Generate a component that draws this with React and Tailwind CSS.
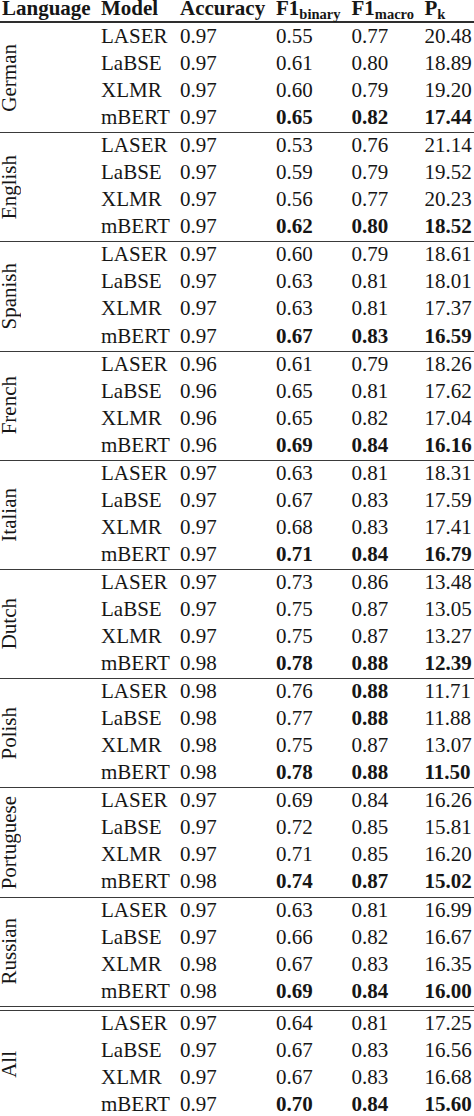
import React from "react";

// resultados por idioma; "*" marca el mejor valor (en negrita)
const groups = [
  {
    lang: "German",
    rows: [
      ["LASER", "0.97", "0.55", "0.77", "20.48"],
      ["LaBSE", "0.97", "0.61", "0.80", "18.89"],
      ["XLMR", "0.97", "0.60", "0.79", "19.20"],
      ["mBERT", "0.97", "*0.65", "*0.82", "*17.44"],
    ],
  },
  {
    lang: "English",
    rows: [
      ["LASER", "0.97", "0.53", "0.76", "21.14"],
      ["LaBSE", "0.97", "0.59", "0.79", "19.52"],
      ["XLMR", "0.97", "0.56", "0.77", "20.23"],
      ["mBERT", "0.97", "*0.62", "*0.80", "*18.52"],
    ],
  },
  {
    lang: "Spanish",
    rows: [
      ["LASER", "0.97", "0.60", "0.79", "18.61"],
      ["LaBSE", "0.97", "0.63", "0.81", "18.01"],
      ["XLMR", "0.97", "0.63", "0.81", "17.37"],
      ["mBERT", "0.97", "*0.67", "*0.83", "*16.59"],
    ],
  },
  {
    lang: "French",
    rows: [
      ["LASER", "0.96", "0.61", "0.79", "18.26"],
      ["LaBSE", "0.96", "0.65", "0.81", "17.62"],
      ["XLMR", "0.96", "0.65", "0.82", "17.04"],
      ["mBERT", "0.96", "*0.69", "*0.84", "*16.16"],
    ],
  },
  {
    lang: "Italian",
    rows: [
      ["LASER", "0.97", "0.63", "0.81", "18.31"],
      ["LaBSE", "0.97", "0.67", "0.83", "17.59"],
      ["XLMR", "0.97", "0.68", "0.83", "17.41"],
      ["mBERT", "0.97", "*0.71", "*0.84", "*16.79"],
    ],
  },
  {
    lang: "Dutch",
    rows: [
      ["LASER", "0.97", "0.73", "0.86", "13.48"],
      ["LaBSE", "0.97", "0.75", "0.87", "13.05"],
      ["XLMR", "0.97", "0.75", "0.87", "13.27"],
      ["mBERT", "0.98", "*0.78", "*0.88", "*12.39"],
    ],
  },
  {
    lang: "Polish",
    rows: [
      ["LASER", "0.98", "0.76", "*0.88", "11.71"],
      ["LaBSE", "0.98", "0.77", "*0.88", "11.88"],
      ["XLMR", "0.98", "0.75", "0.87", "13.07"],
      ["mBERT", "0.98", "*0.78", "*0.88", "*11.50"],
    ],
  },
  {
    lang: "Portuguese",
    rows: [
      ["LASER", "0.97", "0.69", "0.84", "16.26"],
      ["LaBSE", "0.97", "0.72", "0.85", "15.81"],
      ["XLMR", "0.97", "0.71", "0.85", "16.20"],
      ["mBERT", "0.98", "*0.74", "*0.87", "*15.02"],
    ],
  },
  {
    lang: "Russian",
    rows: [
      ["LASER", "0.97", "0.63", "0.81", "16.99"],
      ["LaBSE", "0.97", "0.66", "0.82", "16.67"],
      ["XLMR", "0.98", "0.67", "0.83", "16.35"],
      ["mBERT", "0.98", "*0.69", "*0.84", "*16.00"],
    ],
  },
  {
    lang: "All",
    double: true,
    rows: [
      ["LASER", "0.97", "0.64", "0.81", "17.25"],
      ["LaBSE", "0.97", "0.67", "0.83", "16.56"],
      ["XLMR", "0.97", "0.67", "0.83", "16.68"],
      ["mBERT", "0.97", "*0.70", "*0.84", "*15.60"],
    ],
  },
];

const widths = ["w-[79px]", "w-[96px]", "w-[75.5px]", "w-[73px]", ""];

function Cell({ value, w }) {
  const bold = value.startsWith("*");
  return (
    <span className={`${w} shrink-0 whitespace-nowrap ${bold ? "font-bold" : ""}`}>
      {bold ? value.slice(1) : value}
    </span>
  );
}

function Group({ group, first }) {
  return (
    <div
      className={`flex border-t ${first ? "border-transparent" : "border-[#3a3a3a]"}`}
    >
      <div className="w-[101px] shrink-0 flex items-center">
        <span className="ml-[-1px] leading-[20px] [writing-mode:vertical-rl] [text-orientation:sideways] rotate-180 whitespace-nowrap">
          {group.lang}
        </span>
      </div>
      <div className="flex-1">
        {group.rows.map((r) => (
          <div key={r[0]} className="flex h-[27.05px] leading-[24px]">
            {r.map((v, i) => (
              <Cell key={i} value={v} w={widths[i]} />
            ))}
          </div>
        ))}
      </div>
    </div>
  );
}

export default function App() {
  return (
    <div className="w-[474px] h-[1116px] overflow-hidden bg-white text-[#161616] text-[21px] font-['Liberation_Serif',serif]">
      {/* cabecera */}
      <div className="flex h-[23px] leading-[16px] font-bold border-b-2 border-[#2e2e2e] whitespace-nowrap">
        <span className="w-[101px] shrink-0 pl-[2px]">Language</span>
        <span className="w-[79px] shrink-0">Model</span>
        <span className="w-[96px] shrink-0">Accuracy</span>
        <span className="w-[75.5px] shrink-0">
          F1<span className="text-[14.5px] align-[-4px]">binary</span>
        </span>
        <span className="w-[73px] shrink-0">
          F1<span className="text-[14.5px] align-[-4px]">macro</span>
        </span>
        <span>
          P<span className="text-[14.5px] align-[-4px]">k</span>
        </span>
      </div>

      {groups.map((g, idx) =>
        g.double ? (
          <div key={g.lang} className="border-t border-[#3a3a3a]">
            <div className="mt-[3px]">
              <Group group={g} first={false} />
            </div>
          </div>
        ) : (
          <Group key={g.lang} group={g} first={idx === 0} />
        )
      )}
    </div>
  );
}
